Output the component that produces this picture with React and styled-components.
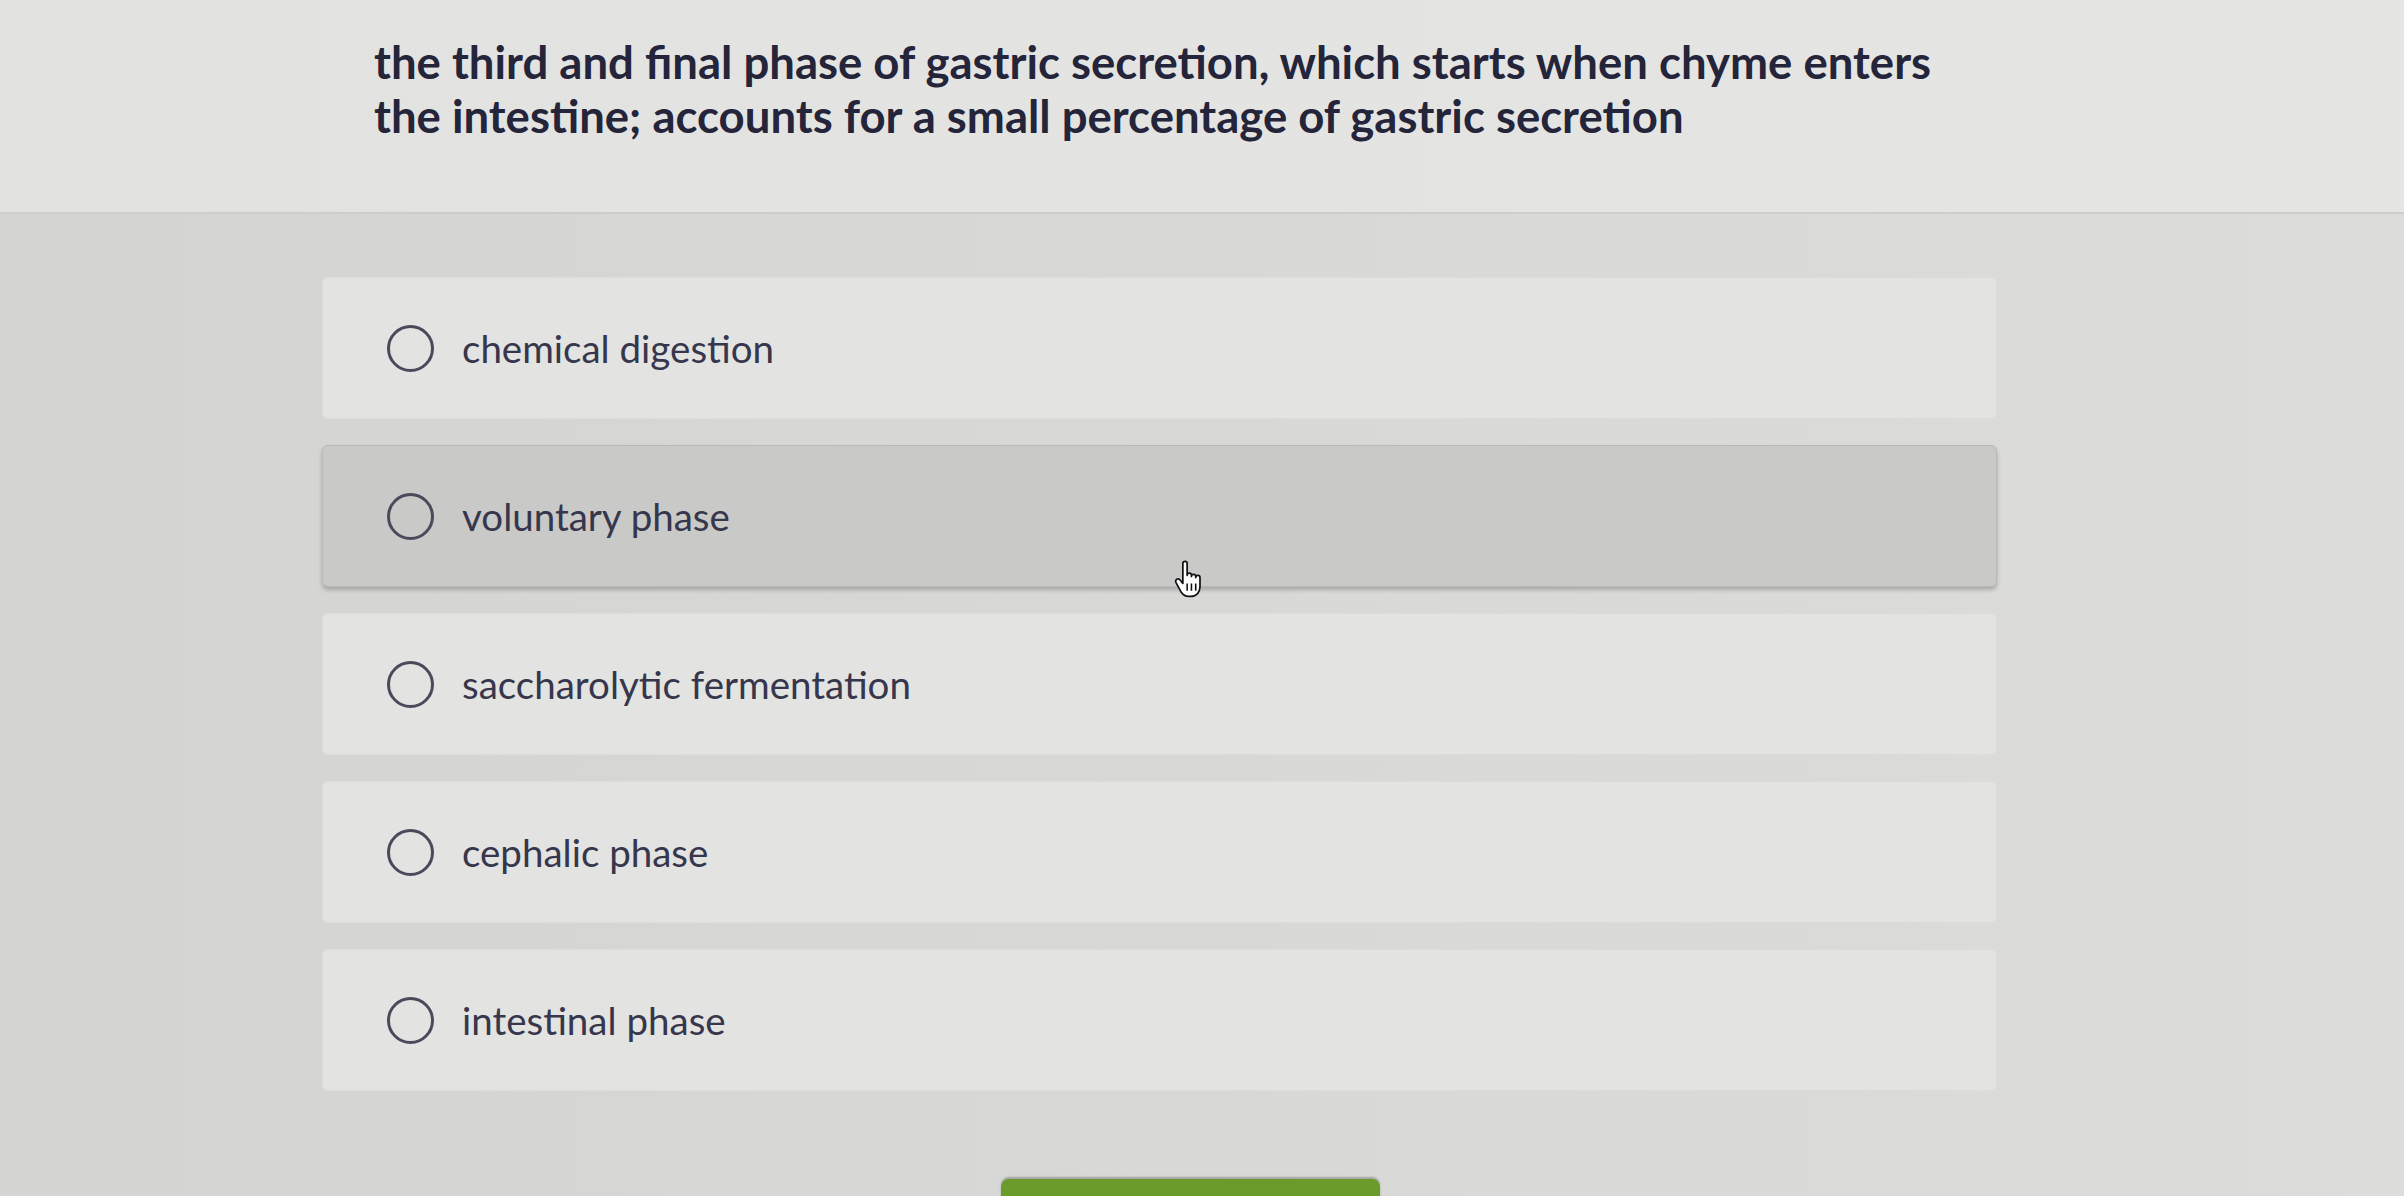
import styled, { createGlobalStyle } from "styled-components";

const GlobalStyle = createGlobalStyle`
  html, body {
    margin: 0;
    padding: 0;
    height: 100%;
    overflow: hidden;
  }
  body {
    background: linear-gradient(90deg, #d4d4d2 0%, #d9d9d7 60%, #dcdcda 100%);
    font-family: Lato, "Open Sans", sans-serif;
  }
`;

const Page = styled.div`
  width: 100vw;
  height: 100vh;
  display: flex;
  flex-direction: column;
  overflow: hidden;
`;

const Header = styled.header`
  flex-shrink: 0;
  height: 214px;
  box-sizing: border-box;
  padding: 35px 0 0 374px;
  background: linear-gradient(90deg, #e2e2e0 0%, #e5e5e3 100%);
  border-bottom: 2px solid #cdcdcb;
`;

const Question = styled.h1`
  margin: 0;
  max-width: 1610px;
  font-size: 45.5px;
  font-weight: 700;
  line-height: 54px;
  color: #24243a;
`;

const Main = styled.main`
  flex: 1;
  padding: 63px 0 0 322px;
  display: flex;
  flex-direction: column;
  position: relative;
`;

const OptionList = styled.div`
  width: 1675px;
  display: flex;
  flex-direction: column;
  gap: 26px;
`;

const Option = styled.label`
  height: 142px;
  box-sizing: border-box;
  display: flex;
  align-items: center;
  gap: 28px;
  padding-left: 64px;
  border-radius: 6px;
  background: ${(p) => (p.$hover ? "#c9c9c7" : "#e3e3e1")};
  border: 1px solid ${(p) => (p.$hover ? "#b9b9b7" : "#dcdcda")};
  box-shadow: ${(p) => (p.$hover ? "0 3px 4px rgba(0,0,0,0.22)" : "none")};
  cursor: pointer;
`;

const Radio = styled.span`
  width: 47px;
  height: 47px;
  box-sizing: border-box;
  border-radius: 50%;
  border: 3px solid #4a4a5c;
  flex-shrink: 0;
`;

const OptionText = styled.span`
  font-size: 38.5px;
  font-weight: 400;
  color: #36364c;
`;

const Footer = styled.div`
  margin-top: 88px;
  padding-left: 679px;
`;

const SubmitButton = styled.button`
  width: 379px;
  height: 60px;
  border: none;
  border-radius: 8px 8px 0 0;
  background: #6a9b2b;
  box-shadow: 0 -2px 2px rgba(0, 0, 0, 0.25);
`;

const Cursor = styled.svg`
  position: absolute;
  left: 1172px;
  top: 346px;
  width: 36px;
  height: 40px;
  pointer-events: none;
`;

const options = [
  "chemical digestion",
  "voluntary phase",
  "saccharolytic fermentation",
  "cephalic phase",
  "intestinal phase",
];

const HandCursor = () => (
  <Cursor viewBox="0 0 24 28">
    <path
      d="M7 2.5c0-1 .7-1.6 1.5-1.6S10 1.5 10 2.5v8.2c0-.9.7-1.5 1.5-1.5s1.5.6 1.5 1.5v.8c0-.9.7-1.5 1.5-1.5s1.5.6 1.5 1.5v.8c0-.9.7-1.5 1.5-1.5s1.5.6 1.5 1.5v6.5c0 3.6-2.4 6.7-6.5 6.7h-1.5c-2.3 0-3.8-1-5-2.7L2.3 16c-.6-.9-.4-2 .4-2.5.8-.5 1.8-.3 2.4.5L7 16.4V2.5z"
      fill="#fff"
      stroke="#111"
      strokeWidth="1.2"
      strokeLinejoin="round"
    />
    <path d="M10 16.5v5M13 16.5v5M16 16.5v5" stroke="#111" strokeWidth="1.1" />
  </Cursor>
);

export default function App() {
  return (
    <Page>
      <GlobalStyle />
      <Header>
        <Question>
          the third and final phase of gastric secretion, which starts when chyme enters the
          intestine; accounts for a small percentage of gastric secretion
        </Question>
      </Header>
      <Main>
        <OptionList>
          {options.map((text, i) => (
            <Option key={text} $hover={i === 1}>
              <Radio />
              <OptionText>{text}</OptionText>
            </Option>
          ))}
        </OptionList>
        <Footer>
          <SubmitButton aria-label="submit" />
        </Footer>
        <HandCursor />
      </Main>
    </Page>
  );
}
